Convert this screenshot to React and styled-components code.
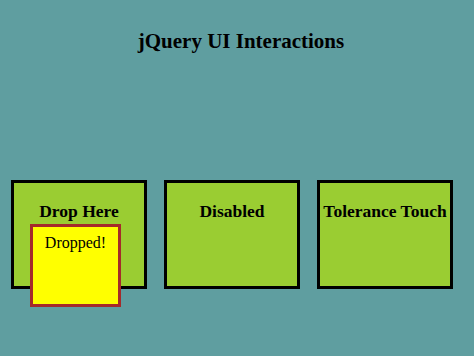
import React from 'react';
import styled, { createGlobalStyle } from 'styled-components';

const GlobalStyle = createGlobalStyle`
  html, body {
    margin: 0;
    padding: 0;
    background-color: #5f9ea0;
    font-family: "Liberation Serif", "Times New Roman", serif;
    color: #000;
  }
`;

const Page = styled.div`
  width: 474px;
  height: 356px;
  overflow: hidden;
  padding-top: 30px;
  box-sizing: border-box;
`;

const Title = styled.h1`
  margin: 0;
  text-align: center;
  font-size: 21px;
  line-height: 22px;
  font-weight: bold;
  padding-left: 8px;
`;

const Row = styled.div`
  display: flex;
  gap: 17px;
  margin-top: 128px;
  padding-left: 11px;
`;

const Droppable = styled.div`
  position: relative;
  width: 136px;
  height: 109px;
  box-sizing: border-box;
  border: 3px solid #000;
  background-color: #9acd32;
  padding-top: 18px;
  text-align: center;
`;

const BoxLabel = styled.p`
  margin: 0;
  font-size: 17.5px;
  line-height: 20px;
  font-weight: bold;
  white-space: nowrap;
`;

const Draggable = styled.div`
  position: absolute;
  left: 16px;
  top: 41px;
  width: 91px;
  height: 83px;
  box-sizing: border-box;
  border: 3px solid #a52a2a;
  background-color: #ffff00;
  padding-top: 7px;
  text-align: center;
  font-size: 16px;
  line-height: 18px;
  z-index: 2;
`;

const boxes = ['Drop Here', 'Disabled', 'Tolerance Touch'];

export default function App() {
  return (
    <>
      <GlobalStyle />
      <Page>
        <Title>jQuery UI Interactions</Title>
        <Row>
          {boxes.map((label, i) => (
            <Droppable key={label}>
              <BoxLabel>{label}</BoxLabel>
              {i === 0 && <Draggable>Dropped!</Draggable>}
            </Droppable>
          ))}
        </Row>
      </Page>
    </>
  );
}
